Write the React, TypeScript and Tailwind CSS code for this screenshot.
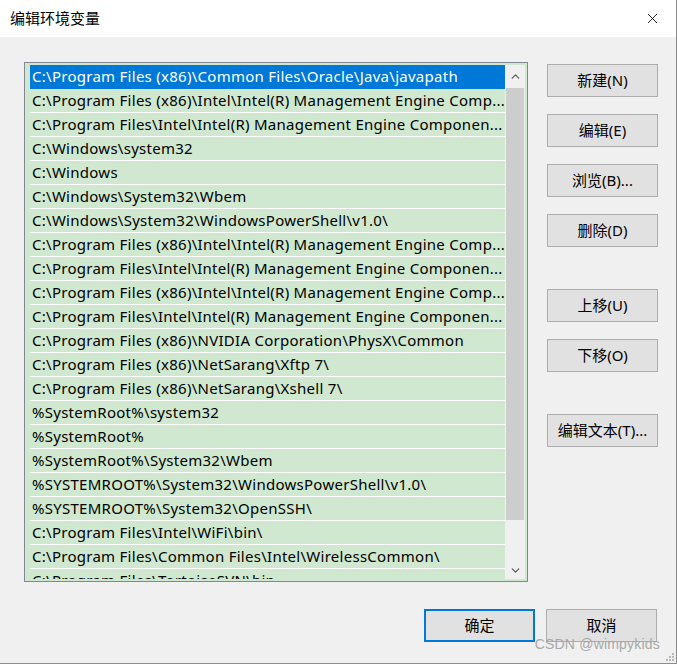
import { X, ChevronUp, ChevronDown } from 'lucide-react';

const paths = [
  'C:\\Program Files (x86)\\Common Files\\Oracle\\Java\\javapath',
  'C:\\Program Files (x86)\\Intel\\Intel(R) Management Engine Comp...',
  'C:\\Program Files\\Intel\\Intel(R) Management Engine Componen...',
  'C:\\Windows\\system32',
  'C:\\Windows',
  'C:\\Windows\\System32\\Wbem',
  'C:\\Windows\\System32\\WindowsPowerShell\\v1.0\\',
  'C:\\Program Files (x86)\\Intel\\Intel(R) Management Engine Comp...',
  'C:\\Program Files\\Intel\\Intel(R) Management Engine Componen...',
  'C:\\Program Files (x86)\\Intel\\Intel(R) Management Engine Comp...',
  'C:\\Program Files\\Intel\\Intel(R) Management Engine Componen...',
  'C:\\Program Files (x86)\\NVIDIA Corporation\\PhysX\\Common',
  'C:\\Program Files (x86)\\NetSarang\\Xftp 7\\',
  'C:\\Program Files (x86)\\NetSarang\\Xshell 7\\',
  '%SystemRoot%\\system32',
  '%SystemRoot%',
  '%SystemRoot%\\System32\\Wbem',
  '%SYSTEMROOT%\\System32\\WindowsPowerShell\\v1.0\\',
  '%SYSTEMROOT%\\System32\\OpenSSH\\',
  'C:\\Program Files\\Intel\\WiFi\\bin\\',
  'C:\\Program Files\\Common Files\\Intel\\WirelessCommon\\',
  'C:\\Program Files\\TortoiseSVN\\bin',
];

const font = "font-['Noto_Sans','Noto_Sans_CJK_SC',sans-serif]";

const Button = ({ label, primary }: { label: string; primary?: boolean }) => (
  <button
    className={`w-[111px] h-[33px] bg-[#e1e1e1] text-[15px] text-black flex items-center justify-center ${
      primary ? 'border-2 border-[#0078d7]' : 'border border-[#adadad]'
    }`}
  >
    {label}
  </button>
);

export default function App() {
  return (
    <div className={`relative w-[677px] h-[664px] bg-[#f0f0f0] border-r border-b border-[#8c8c8c] flex flex-col overflow-hidden ${font}`}>
      {/* Title bar */}
      <div className="h-[37px] bg-white flex items-center justify-between pl-[10px] pr-[15px] shrink-0">
        <span className="text-[15px] text-black">编辑环境变量</span>
        <X className="w-[17px] h-[17px] text-black" strokeWidth={1.2} />
      </div>

      <div className="flex pl-[24px] pt-[25px]">
        {/* Path list */}
        <div className="w-[504px] h-[520px] border border-[#828790] bg-[#cfe8cf] p-[2px] pl-[5px] pr-[2px] flex overflow-hidden">
          <div className="flex-1 flex flex-col overflow-hidden">
            {paths.map((p, i) => (
              <div
                key={i}
                className={`h-[24px] shrink-0 flex items-center pl-[2px] border-b whitespace-nowrap overflow-hidden text-[15px] tracking-[0.27px] ${
                  i === 0 ? 'bg-[#0078d7] text-white border-[#0078d7]' : 'text-black border-white'
                }`}
              >
                {p}
              </div>
            ))}
          </div>
          {/* Scrollbar */}
          <div className="w-[20px] bg-[#f0f0f0] flex flex-col shrink-0">
            <div className="h-[23px] flex items-center justify-center">
              <ChevronUp className="w-[13px] h-[13px] text-[#606060]" strokeWidth={2.5} />
            </div>
            <div className="h-[432px] bg-[#cdcdcd] mx-[1px]" />
            <div className="flex-1" />
            <div className="h-[18px] flex items-center justify-center">
              <ChevronDown className="w-[13px] h-[13px] text-[#606060]" strokeWidth={2.5} />
            </div>
          </div>
        </div>

        {/* Side buttons */}
        <div className="ml-[19px] pt-[2px] flex flex-col">
          <div className="flex flex-col gap-[17px]">
            <Button label="新建(N)" />
            <Button label="编辑(E)" />
            <Button label="浏览(B)..." />
            <Button label="删除(D)" />
          </div>
          <div className="flex flex-col gap-[17px] mt-[42px]">
            <Button label="上移(U)" />
            <Button label="下移(O)" />
          </div>
          <div className="mt-[42px]">
            <Button label="编辑文本(T)..." />
          </div>
        </div>
      </div>

      {/* Footer */}
      <div className="flex justify-end gap-[11px] pr-[19px] mt-[27px]">
        <Button label="确定" primary />
        <Button label="取消" />
      </div>

      {/* Watermark */}
      <span className="absolute right-[16px] bottom-[8px] text-[14px] text-[#a8a8a8] font-['Liberation_Sans',sans-serif] tracking-[0.2px]">
        CSDN @wimpykids
      </span>

      {/* Resize grip */}
      <div className="absolute right-[2px] bottom-[2px] grid grid-cols-3 gap-[1px]">
        <span className="w-[2px] h-[2px]" />
        <span className="w-[2px] h-[2px]" />
        <span className="w-[2px] h-[2px] bg-[#b8b8b8]" />
        <span className="w-[2px] h-[2px]" />
        <span className="w-[2px] h-[2px] bg-[#b8b8b8]" />
        <span className="w-[2px] h-[2px] bg-[#b8b8b8]" />
        <span className="w-[2px] h-[2px] bg-[#b8b8b8]" />
        <span className="w-[2px] h-[2px] bg-[#b8b8b8]" />
        <span className="w-[2px] h-[2px] bg-[#b8b8b8]" />
      </div>
    </div>
  );
}
